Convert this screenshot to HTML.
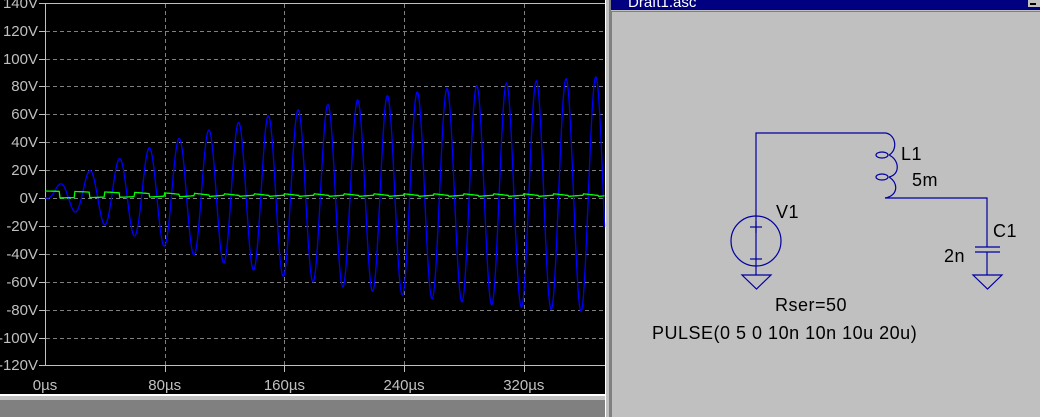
<!DOCTYPE html>
<html><head><meta charset="utf-8"><style>
html,body{margin:0;padding:0;width:1040px;height:417px;overflow:hidden;background:#c0c0c0;font-family:"Liberation Sans",Arial,sans-serif}
svg{position:absolute;left:0;top:0}
</style></head><body>
<svg width="1040" height="417" xmlns="http://www.w3.org/2000/svg">
<rect x="0" y="0" width="605" height="394" fill="#000"/>
<rect x="0" y="394" width="606" height="2" fill="#fff"/>
<rect x="0" y="396" width="606" height="4" fill="#c0c0c0"/>
<rect x="0" y="400" width="606" height="17" fill="#808080"/>
<rect x="605" y="0" width="1" height="417" fill="#fff"/>
<rect x="606" y="0" width="3" height="417" fill="#c0c0c0"/>
<rect x="609" y="0" width="2" height="417" fill="#808080"/>
<g id="grid" stroke="#808080" stroke-width="1" stroke-dasharray="4,3" fill="none"></g>
<g stroke="#c0c0c0" stroke-width="1" fill="none">
<line x1="45.5" y1="3.5" x2="605" y2="3.5"/>
<line x1="45.5" y1="3" x2="45.5" y2="366"/>
<line x1="45" y1="365.5" x2="605" y2="365.5"/>
</g>
<g id="ticks" stroke="#c0c0c0" stroke-width="1"></g>
<g id="labels" fill="#c0c0c0" font-family="Liberation Sans, Arial, sans-serif" font-size="15"></g>
<polyline id="blue" fill="none" stroke="#0000ff" stroke-width="1.3"/>
<polyline id="green" fill="none" stroke="#00ff00" stroke-width="1.3"/>
<rect x="611" y="0" width="429" height="10" fill="#000080"/>
<text x="628" y="7" fill="#fff" font-size="15">Draft1.asc</text>
<rect x="1028" y="0" width="12" height="7" fill="#c0c0c0"/>
<rect x="1030" y="3" width="6" height="2" fill="#000"/>
<rect x="611" y="10" width="429" height="1" fill="#c0c0c0"/>
<rect x="611" y="11" width="429" height="1" fill="#808080"/>
<rect x="611" y="11" width="1" height="406" fill="#808080"/>
<rect x="612" y="12" width="428" height="405" fill="#c0c0c0"/>
<g stroke="#0000a0" stroke-width="1.2" fill="none">
<polyline points="756,275 756,133 886,133"/>
<path d="M886,133 C896,135 898,150 889,155 M889,155 C900,160 900,175 889,177 M889,177 C899,183 898,196 885,198"/>
<ellipse cx="882" cy="155" rx="6" ry="3"/>
<ellipse cx="882" cy="177" rx="6" ry="3"/>
<polyline points="885,198 987,198 987,247"/>
<line x1="975" y1="247" x2="1000" y2="247"/>
<line x1="975" y1="252" x2="1000" y2="252"/>
<line x1="987" y1="252" x2="987" y2="275"/>
<path d="M973,275 L1002,275 L987.5,289 Z"/>
<circle cx="756" cy="241" r="25"/>
<line x1="750" y1="227" x2="762" y2="227"/><line x1="756" y1="221" x2="756" y2="233"/>
<line x1="750" y1="259" x2="762" y2="259"/>
<path d="M742,275 L771,275 L756.5,289 Z"/>
</g>
<g fill="#000" font-size="18" letter-spacing="0.5" font-family="Liberation Sans, Arial, sans-serif">
<text x="776" y="218">V1</text>
<text x="901" y="160">L1</text>
<text x="912" y="186">5m</text>
<text x="993" y="237">C1</text>
<text x="944" y="262">2n</text>
<text x="775" y="311">Rser=50</text>
<text x="652" y="339">PULSE(0 5 0 10n 10n 10u 20u)</text>
</g>
</svg>
<script>
var NS="http://www.w3.org/2000/svg";
function el(p,t,a,txt){var e=document.createElementNS(NS,t);for(var k in a)e.setAttribute(k,a[k]);if(txt)e.textContent=txt;document.getElementById(p).appendChild(e);}
var y0=198,dy=27.9,x0=45,dx=119.7/80;
for(var i=-6;i<=6;i++){var y=Math.round(y0-i*dy)+0.5;el("grid","line",{x1:46,y1:y,x2:605,y2:y});el("ticks","line",{x1:39,y1:y,x2:45,y2:y});}
el("ticks","line",{x1:39,y1:3.5,x2:45,y2:3.5});
for(var i=-6;i<=7;i++){var y=Math.round(y0-i*dy);el("labels","text",{x:38,y:y+5,"text-anchor":"end"},(i*20)+"V");}
for(var j=1;j<=4;j++){var x=Math.round(x0+j*80*dx)+0.5;el("grid","line",{x1:x,y1:4,x2:x,y2:365});el("ticks","line",{x1:x,y1:366,x2:x,y2:372});}
for(var j=0;j<=4;j++){var x=x0+j*80*dx;el("labels","text",{x:x,y:390,"text-anchor":"middle"},(j*80)+"µs");}
var pb=[],pg=[];
for(var t=0;t<=374;t+=0.4){var A=95*(1-Math.exp(-(t+4)/170));var v=2.5-A*Math.cos(2*Math.PI*t/19.9);
if(t<3)v=v*(t/3);
pb.push((x0+t*dx).toFixed(1)+","+(y0-v*dy/20).toFixed(1));}
document.getElementById("blue").setAttribute("points",pb.join(" "));
for(var t=0;t<=374;t+=0.5){var ph=t%20;var f=Math.min(1,t/120);var hi=5-2*f,lo=0+1.2*f;var v;
if(ph<10)v=hi-(f*1.2)*(ph/10);else v=lo+(f*0.8)*((ph-10)/10);
pg.push((x0+t*dx).toFixed(1)+","+(y0-v*dy/20).toFixed(1));}
document.getElementById("green").setAttribute("points",pg.join(" "));
</script>
</body></html>
